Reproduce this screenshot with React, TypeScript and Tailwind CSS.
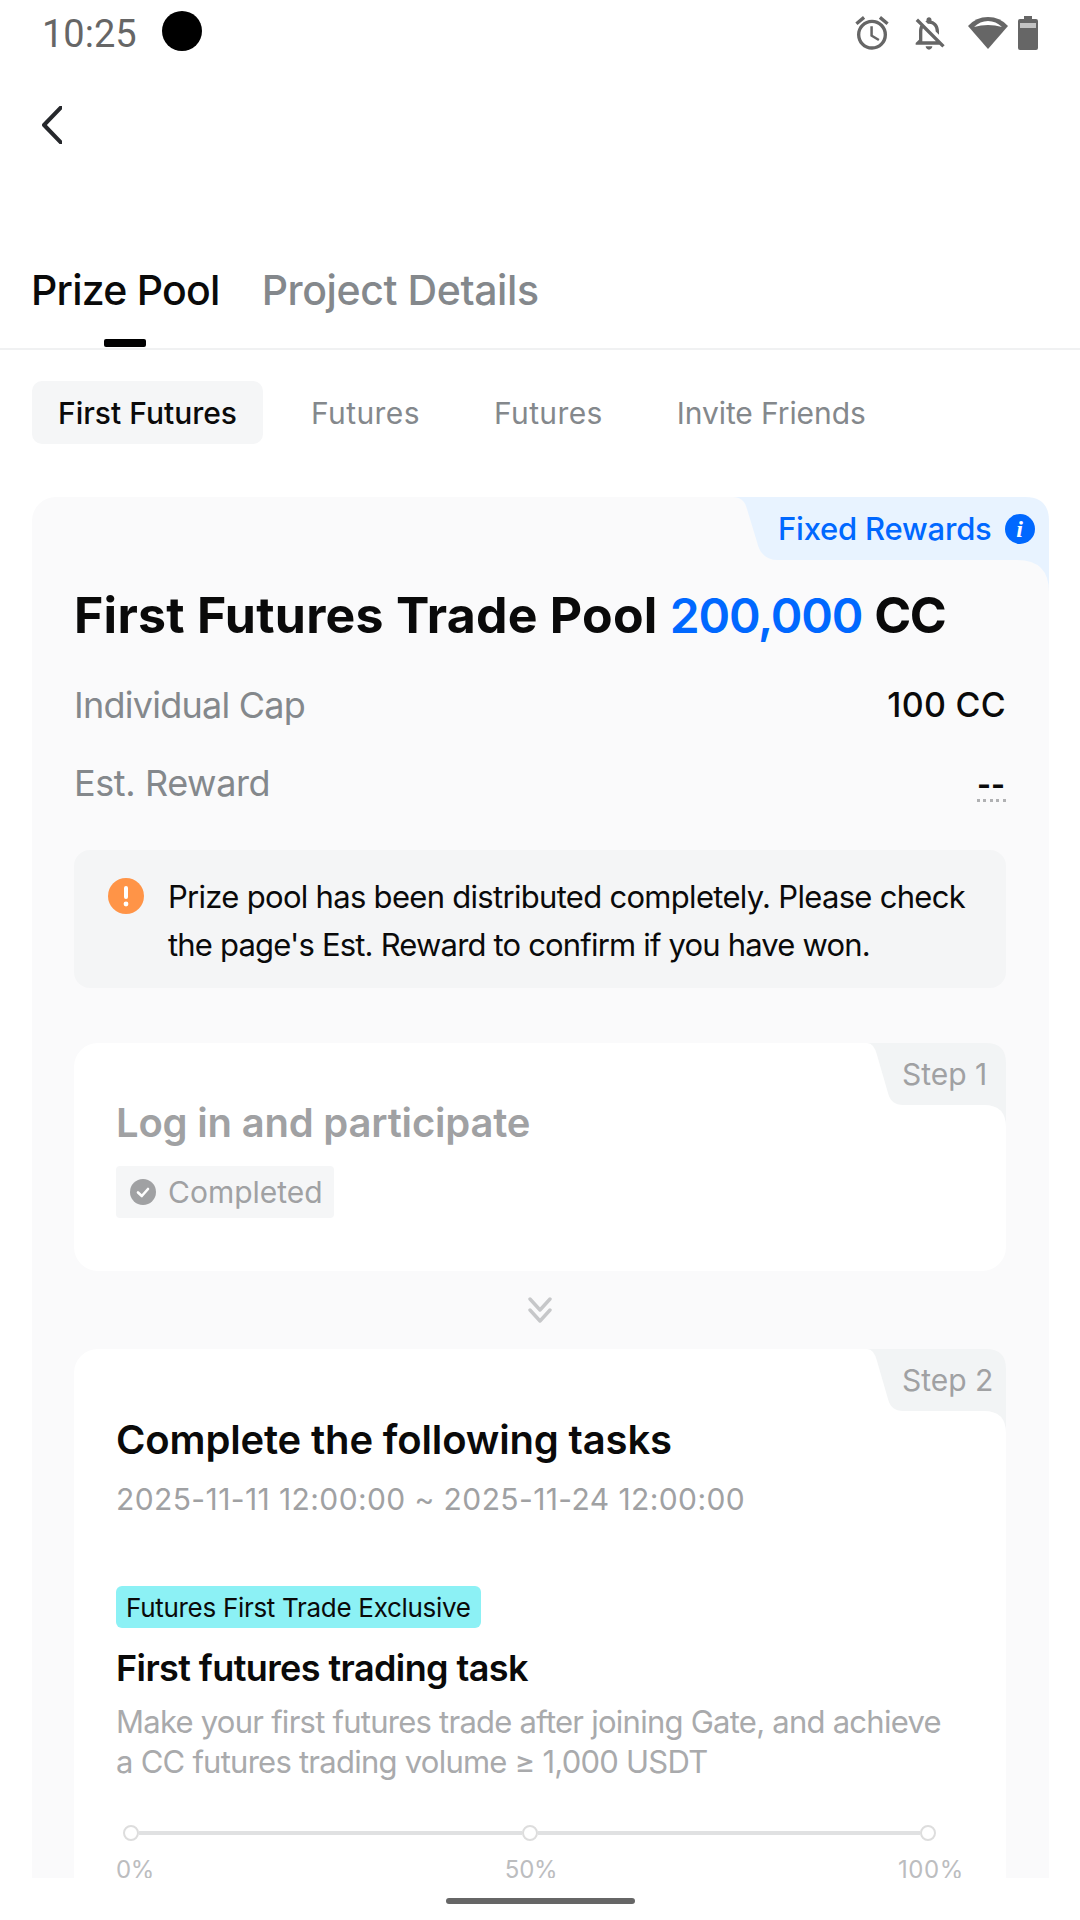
import { MdOutlineAccessAlarm, MdOutlineNotificationsOff } from "react-icons/md";

function StepTag({ label }: { label: string }) {
  return (
    <div className="absolute top-0 right-0 w-[139px] h-[84px]">
      <svg className="absolute inset-0" width="139" height="84" viewBox="0 0 139 84">
        <path d="M0 0H119Q139 0 139 20V84Q139 62 117 62H36Q24 62 21 50L10 12Q7 0 0 0Z" fill="#f2f4f5" />
      </svg>
      <span className="absolute left-[35px] top-[11px] text-[30px] leading-[40px] text-[#a0a1a3]">{label}</span>
    </div>
  );
}

export default function App() {
  return (
    <div className="w-[1080px] h-[1920px] flex flex-col bg-white overflow-hidden font-['Inter',sans-serif]">
      <div className="h-[66px] shrink-0 flex items-center pl-[42px] pr-[42px]">
        <span className="pt-[2px] text-[38px] font-['Roboto',sans-serif] text-[#666666]">10:25</span>
        <div className="w-[40px] h-[40px] rounded-full bg-black ml-[25px] mb-[4px]" />
        <div className="ml-auto flex items-center text-[#666666]">
          <MdOutlineAccessAlarm size={40} />
          <MdOutlineNotificationsOff size={40} className="ml-[17px]" />
          <svg className="ml-[19px]" width="40" height="34" viewBox="0 0 40 34">
            <path d="M20 33L0 10Q8 1 20 1T40 10Z" fill="#666666" />
            <path d="M6 11Q12 5 20 5T34 11Q27 9 20 9T6 11Z" fill="#ffffff" />
          </svg>
          <svg className="ml-[10px]" width="20" height="34" viewBox="0 0 20 34">
            <path d="M6 0H14V3H18Q20 3 20 5V32Q20 34 18 34H2Q0 34 0 32V5Q0 3 2 3H6Z" fill="#666666" />
            <rect x="2" y="7" width="16" height="5" fill="#c4c4c4" />
          </svg>
        </div>
      </div>

      <div className="h-[118px] shrink-0 flex items-center pl-[42px]">
        <svg width="20" height="38" viewBox="0 0 20 38" fill="none">
          <path d="M19 1.5L2 19L19 36.5" stroke="#26282c" strokeWidth="4" strokeLinecap="round" strokeLinejoin="round" />
        </svg>
      </div>

      <div className="shrink-0 flex items-start gap-[42px] pl-[31px] pr-[32px] pt-[80px] pb-[1px] border-b-2 border-[#f0f1f2] h-[166px]">
        <div className="flex flex-col items-center">
          <span className="text-[41px] leading-[52px] font-medium tracking-[-0.75px] text-[#0a0a0a]">Prize Pool</span>
          <div className="w-[42px] h-[8px] mt-[23px] rounded-[2px] bg-black" />
        </div>
        <span className="text-[41px] leading-[52px] font-medium tracking-[-0.4px] text-[#84888c]">Project Details</span>
      </div>

      <div className="shrink-0 flex gap-[22px] px-[32px] mt-[31px]">
        <div className="h-[63px] px-[26px] pt-[1px] flex items-center rounded-[10px] bg-[#f5f6f7] text-[30px] font-medium text-[#0a0a0a]">First Futures</div>
        <div className="h-[63px] px-[26px] pt-[1px] flex items-center text-[30px] tracking-[0.4px] text-[#84888c]">Futures</div>
        <div className="h-[63px] px-[26px] pt-[1px] flex items-center text-[30px] tracking-[0.4px] text-[#84888c]">Futures</div>
        <div className="h-[63px] px-[26px] pt-[1px] flex items-center text-[30px] tracking-[-0.1px] text-[#84888c]">Invite Friends</div>
      </div>

      <div className="flex-1 min-h-0 overflow-hidden pl-[32px] pr-[31px] pt-[53px]">
        <div className="relative bg-[#fafafb] rounded-t-[24px] pl-[42px] pr-[43px] pt-[88px]">
          <div className="absolute top-0 right-0 w-[316px] h-[95px]">
            <svg className="absolute inset-0" width="316" height="95" viewBox="0 0 316 95">
              <path d="M0 0H292Q316 0 316 24V95Q316 63 284 63H45Q28 63 24 45L14 12Q11 0 0 0Z" fill="#e8f3ff" />
            </svg>
            <div className="absolute left-[45px] top-[12px] flex items-center gap-[13px]">
              <span className="text-[31px] leading-[40px] font-medium tracking-[-0.2px] text-[#0068ff]">Fixed Rewards</span>
              <div className="w-[30px] h-[30px] rounded-full bg-[#0068ff] flex items-center justify-center text-white text-[24px] leading-none font-bold italic font-['Liberation_Serif',serif]">i</div>
            </div>
          </div>

          <h1 className="text-[50px] leading-[60px] font-bold tracking-[0.25px] text-[#0a0a0a] whitespace-nowrap">
            First Futures Trade Pool <span className="text-[48px] font-semibold tracking-[-1.2px] text-[#0068ff]">200,000</span> <span className="tracking-[-1.5px]">CC</span>
          </h1>

          <div className="flex justify-between items-center mt-[37px] text-[36px] leading-[44px]">
            <span className="tracking-[-0.75px] text-[#84888c]">Individual Cap</span>
            <span className="text-[34px] font-medium tracking-[0.3px] text-[#0a0a0a]">100 CC</span>
          </div>
          <div className="flex justify-between items-start mt-[34px] text-[36px] leading-[44px]">
            <span className="tracking-[-0.4px] text-[#84888c]">Est. Reward</span>
            <div className="w-[30px] mt-[3px] flex flex-col items-center">
              <span className="h-[36px] text-[30px] leading-[40px] font-bold text-[#0a0a0a]">--</span>
              <div className="flex gap-[3.5px] mt-[-1px]">
                <div className="w-[3px] h-[3px] bg-[#b0b1b3]" />
                <div className="w-[3px] h-[3px] bg-[#b0b1b3]" />
                <div className="w-[3px] h-[3px] bg-[#b0b1b3]" />
                <div className="w-[3px] h-[3px] bg-[#b0b1b3]" />
                <div className="w-[3px] h-[3px] bg-[#b0b1b3]" />
              </div>
            </div>
          </div>

          <div className="flex mt-[45px] h-[138px] rounded-[16px] bg-[#f4f5f6] pl-[34px] pr-[20px] pt-[23px]">
            <svg className="mt-[5px] shrink-0" width="36" height="36" viewBox="0 0 36 36">
              <circle cx="18" cy="18" r="18" fill="#ff9447" />
              <rect x="16" y="8" width="4" height="13" rx="2" fill="#ffffff" />
              <circle cx="18" cy="26" r="2.4" fill="#ffffff" />
            </svg>
            <p className="ml-[24px] text-[31px] leading-[48px] tracking-[-0.7px] text-[#0a0a0a]">
              Prize pool has been distributed completely. Please check <span className="tracking-[-0.82px]">the page's Est. Reward to confirm if you have won.</span>
            </p>
          </div>

          <div className="relative mt-[55px] bg-white rounded-[24px] h-[228px] px-[42px] pt-[54px]">
            <StepTag label="Step 1" />
            <h2 className="text-[40px] leading-[52px] font-semibold tracking-[-0.2px] text-[#a0a1a3]">Log in and participate</h2>
            <div className="inline-flex items-center h-[52px] mt-[17px] pl-[14px] pr-[11px] rounded-[4px] bg-[#f5f6f7]">
              <svg width="26" height="26" viewBox="0 0 26 26" fill="none">
                <circle cx="13" cy="13" r="13" fill="#a0a1a3" />
                <path d="M8 13.5L11.8 17L18 10" stroke="#ffffff" strokeWidth="2.6" strokeLinecap="round" strokeLinejoin="round" />
              </svg>
              <span className="ml-[12px] text-[30px] text-[#a0a1a3]">Completed</span>
            </div>
          </div>

          <div className="h-[78px] flex items-center justify-center">
            <svg width="24" height="26" viewBox="0 0 24 26" fill="none">
              <path d="M2 2L12 13L22 2M2 13L12 24L22 13" stroke="#c6c7c9" strokeWidth="3.4" strokeLinecap="round" strokeLinejoin="round" />
            </svg>
          </div>

          <div className="relative bg-white rounded-t-[24px] px-[42px] pt-[65px]">
            <StepTag label="Step 2" />
            <h2 className="text-[40px] leading-[52px] font-semibold tracking-[-0.15px] text-[#0a0a0a]">Complete the following tasks</h2>
            <p className="mt-[13px] text-[30px] leading-[40px] tracking-[0.4px] text-[#a0a1a3]">2025-11-11 12:00:00 ~ 2025-11-24 12:00:00</p>

            <div className="inline-flex items-center h-[42px] mt-[67px] px-[10px] rounded-[6px] bg-[#8cf1f5] text-[26px] tracking-[-0.3px] text-[#0a0a0a]">Futures First Trade Exclusive</div>
            <h3 className="mt-[16px] text-[36px] leading-[48px] font-semibold tracking-[-0.6px] text-[#0a0a0a]">First futures trading task</h3>
            <p className="mt-[10px] text-[31px] leading-[40px] tracking-[-0.75px] text-[#a9aaac]">
              Make your first futures trade after joining Gate, and achieve a CC futures trading volume ≥ 1,000 USDT
            </p>

            <div className="flex items-center mt-[43px] pl-[7px] pr-[28px] h-[16px]">
              <div className="w-[16px] h-[16px] rounded-full bg-white border-2 border-[#dddddd]" />
              <div className="flex-1 h-[4px] bg-[#e0e1e2]" />
              <div className="w-[16px] h-[16px] rounded-full bg-white border-2 border-[#dddddd]" />
              <div className="flex-1 h-[4px] bg-[#e0e1e2]" />
              <div className="w-[16px] h-[16px] rounded-full bg-white border-2 border-[#dddddd]" />
            </div>
            <div className="flex justify-between mt-[21px] text-[24px] leading-[16px] tracking-[-0.3px] text-[#bcbdbf]">
              <span>0%</span>
              <span className="ml-[10px]">50%</span>
              <span className="tracking-[0.6px]">100%</span>
            </div>
          </div>
        </div>
      </div>

      <div className="relative -mt-[8px] h-[42px] shrink-0 bg-white flex justify-center pt-[20px]">
        <div className="w-[189px] h-[6px] rounded-full bg-[#666666]" />
      </div>
    </div>
  );
}
